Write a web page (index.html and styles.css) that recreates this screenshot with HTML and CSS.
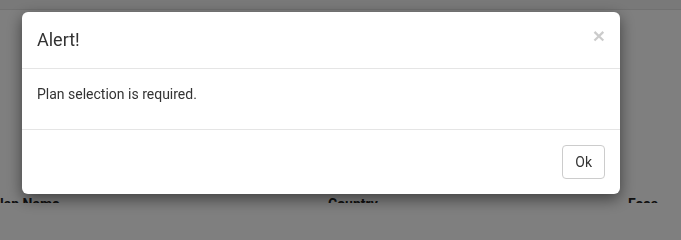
FILE: index.html
```html
<!DOCTYPE html>
<html>
<head>
<meta charset="utf-8">
<link rel="stylesheet" href="styles.css">
</head>
<body>
<div class="page">
  <div class="topbar"></div>
  <div class="spacer"></div>
  <div class="table-head">
    <div class="th th-name">Plan Name</div>
    <div class="th th-country">Country</div>
    <div class="th th-fees">Fees</div>
  </div>
</div>
<div class="backdrop"></div>
<div class="modal">
  <div class="modal-header">
    <h4 class="modal-title">Alert!</h4>
    <button class="close" type="button">&times;</button>
  </div>
  <div class="modal-body">
    <p>Plan selection is required.</p>
  </div>
  <div class="modal-footer">
    <button class="btn" type="button">Ok</button>
  </div>
</div>
</body>
</html>
```
FILE: styles.css
```css
html, body {
  margin: 0;
  padding: 0;
  height: 203px;
  overflow: hidden;
  font-family: Roboto, "Liberation Sans", sans-serif;
  color: #333;
  background: #fff;
}
.page {
  display: flex;
  flex-direction: column;
  height: 203px;
  overflow: hidden;
}
.topbar {
  height: 9px;
  background: #f3f3f3;
  border-bottom: 1px solid #e2e2e2;
  flex: none;
}
.spacer {
  height: 184px;
  flex: none;
}
.table-head {
  display: flex;
  flex: none;
  font-weight: bold;
  font-size: 14px;
  color: #222;
  line-height: 20px;
}
.th-name { width: 337px; margin-left: -9px; flex: none; }
.th-country { width: 300px; flex: none; }
.th-fees { flex: 1; }
.backdrop {
  position: fixed;
  inset: 0;
  background: #000;
  opacity: 0.5;
}
.modal {
  position: fixed;
  left: 22px;
  top: 12px;
  width: 598px;
  background: #fff;
  border-radius: 6px;
  box-shadow: 0 5px 15px rgba(0,0,0,0.5);
  box-sizing: border-box;
}
.modal-header {
  display: flex;
  justify-content: space-between;
  align-items: flex-start;
  padding: 15px;
  border-bottom: 1px solid #e5e5e5;
}
.modal-title {
  margin: 0;
  font-size: 18px;
  font-weight: 400;
  line-height: 26px;
  color: #333;
}
.close {
  border: 0;
  background: none;
  padding: 0;
  margin-top: -2px;
  font-size: 21px;
  font-weight: bold;
  line-height: 1;
  color: #000;
  opacity: 0.2;
  font-family: "Liberation Sans", sans-serif;
  cursor: pointer;
}
.modal-body {
  padding: 15px;
  font-size: 14px;
  line-height: 20px;
}
.modal-body p {
  margin: 0 0 10px;
}
.modal-footer {
  display: flex;
  justify-content: flex-end;
  padding: 15px;
  border-top: 1px solid #e5e5e5;
}
.btn {
  font-family: Roboto, "Liberation Sans", sans-serif;
  font-size: 14px;
  line-height: 20px;
  padding: 6px 12px;
  color: #333;
  background: #fff;
  border: 1px solid #ccc;
  border-radius: 4px;
}
```
